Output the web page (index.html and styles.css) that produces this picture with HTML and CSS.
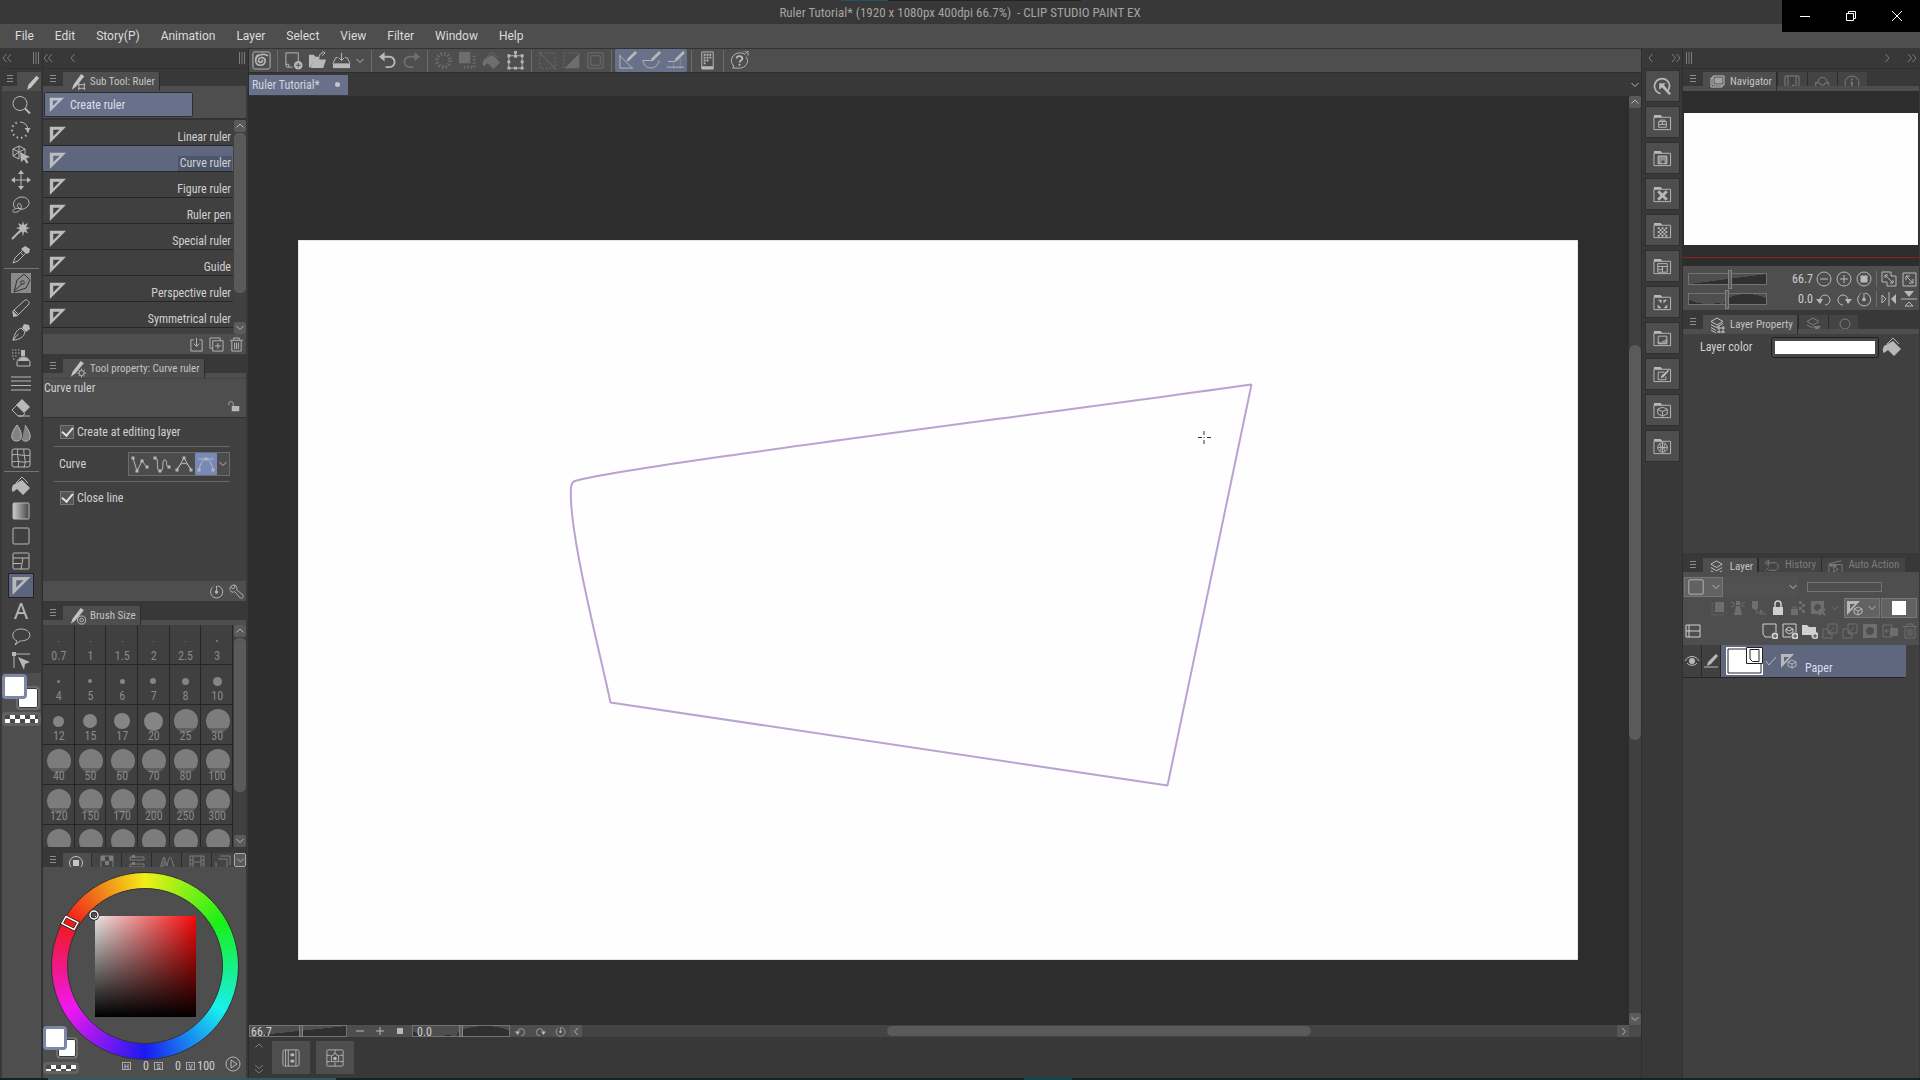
FILE: index.html
```
<!DOCTYPE html>
<html lang="en">
<head>
<meta charset="utf-8">
<title>Ruler Tutorial* - CLIP STUDIO PAINT EX</title>
<link rel="stylesheet" href="styles.css">
</head>
<body>
<svg class="defs" aria-hidden="true">
  <symbol id="menu" viewBox="0 0 8 10"><path d="M1 1.500h6M1 4.500h6M1 7.500h6"/></symbol>
  <symbol id="down" viewBox="0 0 10 10"><path d="M1.500 3L5 6.500 8.500 3"/></symbol>
  <symbol id="up" viewBox="0 0 10 10"><path d="M1.500 6.500L5 3l3.500 3.500"/></symbol>
  <symbol id="left" viewBox="0 0 10 10"><path d="M6.500 1L3 5l3.500 4"/></symbol>
  <symbol id="right" viewBox="0 0 10 10"><path d="M3.500 1L7 5 3.500 9"/></symbol>
  <symbol id="left2" viewBox="0 0 10 10"><path d="M4.500 1L1 5l3.500 4M9 1L5.500 5 9 9"/></symbol>
  <symbol id="right2" viewBox="0 0 10 10"><path d="M1 1l3.500 4L1 9M5.500 1L9 5 5.500 9"/></symbol>
  <symbol id="down2" viewBox="0 0 10 10"><path d="M1 1l4 3.500L9 1M1 5.500L5 9l4-3.500"/></symbol>
  <symbol id="grip" viewBox="0 0 6 12"><path d="M.5 0v12M3 0v12M5.500 0v12"/></symbol>
  <symbol id="pencil" viewBox="0 0 20 20"><path class="f" d="M15 3l3 2.500L9 16l-4.500 2.500L6 13z"/></symbol>
  <symbol id="pencil-list" viewBox="0 0 20 20"><path class="f" d="M13.500 1l3.500 2.500L8 15l-5 3.500L5 13z"/><path d="M10 13h8M10 17h8M11 11v8M17 11v8"/></symbol>
  <symbol id="pencil-gear" viewBox="0 0 20 20"><path class="f" d="M13 1l3.500 2.500L7 15l-5 3.500L4 13z"/><circle cx="14" cy="14.500" r="2.800"/><path d="M14 9.500v2M14 17.500v2M9 14.500h2M17 14.500h2M10.500 11l1.200 1.200M17.500 11l-1.200 1.200M10.500 18l1.200-1.200M17.500 18l-1.200-1.200"/></symbol>
  <symbol id="pencil-ring" viewBox="0 0 20 20"><path class="f" d="M13 1l3.500 2.500L7 15l-5 3.500L4 13z"/><circle cx="14" cy="14.500" r="4.500"/><circle cx="14" cy="14.500" r="2"/></symbol>
  <symbol id="zoomer" viewBox="0 0 20 20"><circle cx="9" cy="8.500" r="7"/><path d="M14 13.500l5 5" stroke-width="2"/></symbol>
  <symbol id="rotate-view" viewBox="0 0 20 20"><path d="M9 2a8 8 0 0 1 8 8" /><path d="M17 11a8 8 0 1 1-9-9" stroke-dasharray="1.500 3" stroke-width="2"/><path class="f" d="M13.500 8h6L17 12z"/></symbol>
  <symbol id="object" viewBox="0 0 20 20"><path d="M8 1l6 3v5M8 1L2 4v7l6 3M2 4l6 3 6-3M8 7v7M2 11l6-4M8 1v6"/><path class="f" d="M9 7l10 5-4 1.500 2.500 4-2 1-2.500-4-3 2.500z"/></symbol>
  <symbol id="move" viewBox="0 0 20 20"><path d="M10 3v14M3 10h14"/><path class="f" d="M10 0l3 4H7zM10 20l3-4H7zM0 10l4-3v6zM20 10l-4-3v6z"/></symbol>
  <symbol id="lasso" viewBox="0 0 20 20"><path d="M4 13C0 9 4 2 11 2s9 7 5 10-7 3-9 0 2-5 3-2-1 6-4 7-5-.5-4-2 5-2 9-1"/></symbol>
  <symbol id="wand" viewBox="0 0 20 20"><path d="M1 19l8-8" stroke-width="2"/><path class="f" d="M12 1l1 4 4-2-2 4 4 1-4 1.500 2 4-4-2-1 5-1-5-4 2 2-4-4-1.500 4-1-2-4 4 2z"/></symbol>
  <symbol id="dropper" viewBox="0 0 20 20"><path class="f" d="M14 1l5 3-1 4-3 1-5-5z"/><path d="M11 6L4 13l-2 5 5-2 7-7M10 8l3 3"/></symbol>
  <symbol id="pen" viewBox="0 0 20 20"><path class="chip" d="M0 0h20v20H0z"/><path d="M13 1l6 6-4 8-12 4L6 7zM3 18l8-7" stroke="#333"/><circle cx="11.500" cy="9.500" r="1.800" stroke="#333"/></symbol>
  <symbol id="pencil-tool" viewBox="0 0 20 20"><path d="M14 2c2-1 5 2 4 4L7 17c-3 2-6-1-5-4zM3 12l5 5"/><path class="f" d="M2 13l5 5-5 1z"/></symbol>
  <symbol id="brush" viewBox="0 0 20 20"><path class="f" d="M13 1l5 1 1 4-4 3-4-4z"/><path d="M10 5C5 7 4 11 2 17c6 0 11-3 12-8zM2 18c2-4 5-7 6-7"/></symbol>
  <symbol id="airbrush" viewBox="0 0 20 20"><path d="M1 2h9M1 5h9M1 8h6M2 11h3" stroke-dasharray="1.500 1.500"/><path class="f" d="M10 2h4v6h-4z"/><path d="M6 18v-4c1-4 4-5 6-5s6 1 7 5v4z"/><path class="f" d="M7 13c2-5 9-5 11 0z"/></symbol>
  <symbol id="lines" viewBox="0 0 20 20"><path d="M0 4h20M0 8h20M0 12.500h20M0 17h20"/></symbol>
  <symbol id="eraser" viewBox="0 0 20 20"><path class="f" d="M11 1l8 8-6 6-8-8z"/><path d="M6 7l-5 5 6 6h5l2-3M7 18h12"/></symbol>
  <symbol id="blend" viewBox="0 0 20 20"><path d="M6 2c3 4 5 8 4 13-1 4-8 4-9 0S3 6 6 2zM14 2c3 4 6 9 5 13s-7 4-8 1" fill="currentColor" fill-opacity=".55"/></symbol>
  <symbol id="mesh" viewBox="0 0 20 20"><rect x="1" y="1" width="18" height="18" rx="2"/><path d="M7 1c-2 6 2 12 0 18M13 1c-1 6 3 12 0 18M1 7c6-2 12 2 18 0M1 14c6-2 12 2 18-1"/></symbol>
  <symbol id="fill" viewBox="0 0 20 20"><path class="f" d="M2 9l9-5 8 8-7 7-6-6-4 3c-2-2-1-5 0-7z"/><path d="M5 7l6-6 6 6"/></symbol>
  <symbol id="gradient" viewBox="0 0 20 20"><rect x="2" y="2" width="16" height="16" rx="1" fill="url(#fade)"/></symbol>
  <symbol id="square" viewBox="0 0 20 20"><rect x="2" y="2" width="16" height="16" rx="1"/></symbol>
  <symbol id="frame" viewBox="0 0 20 20"><rect x="2" y="2" width="16" height="16" rx="1"/><path d="M2 7h16M2 12.500h8M12 7l-2 11"/></symbol>
  <symbol id="ruler" viewBox="0 0 20 20"><path class="f" fill-rule="evenodd" d="M1 1h19L1 20zM5 4.500v7.500L12.500 4.500z"/></symbol>
  <symbol id="balloon" viewBox="0 0 20 20"><path d="M6 15C-1 12 1 3 10 3s12 8 5 11c-3 1-6 1-6 1l-5 4z"/></symbol>
  <symbol id="correct" viewBox="0 0 20 20"><path d="M3 3h16M3 3v14"/><path class="f" d="M1 1h4v4H1zM7 6l12 5-5 2-1 6z"/></symbol>
  <symbol id="import" viewBox="0 0 16 16"><path d="M5 3H2v12h12V3h-3M8 1v9M5 7l3 3 3-3"/></symbol>
  <symbol id="duplicate" viewBox="0 0 16 16"><path d="M4 12H1V1h11v3M4 4h11v11H4zM9.500 6.500v6M6.500 9.500h6"/></symbol>
  <symbol id="trash" viewBox="0 0 16 16"><path d="M1 3.500h14M5 3V1h6v2M3 4v11h10V4M6 6v7M8 6v7M10 6v7"/></symbol>
  <symbol id="unlock" viewBox="0 0 16 16"><path class="f" d="M5 8h10v7H5z"/><path d="M7 8V5a3 3 0 0 0-6 0v2"/></symbol>
  <symbol id="curve1" viewBox="0 0 20 20"><path d="M3 4l4 13 5-10 5 6"/><path class="f" d="M1.500 2.500h3v3h-3zM5.500 15.500h3v3h-3zM10.500 5.500h3v3h-3zM15.500 11.500h3v3h-3z"/></symbol>
  <symbol id="curve2" viewBox="0 0 20 20"><path d="M3 4c5 0 0 13 5 13s1-12 5-11c3 0 0 7 4 7"/><path class="f" d="M1.500 2.500h3v3h-3zM6.500 15.500h3v3h-3zM15.500 11.500h3v3h-3z"/></symbol>
  <symbol id="curve3" viewBox="0 0 20 20"><path d="M3 16c3-9 11-9 14 0M3 16l7-12 7 12" stroke-width="1"/><path class="f" d="M1.500 14.500h3v3h-3zM8.500 2.500h3v3h-3zM15.500 14.500h3v3h-3z"/></symbol>
  <symbol id="curve4" viewBox="0 0 20 20"><path d="M3 17C5 1 15 1 17 17M2 5h16"/><path class="f" d="M1.500 14.500h3v3h-3zM8.500 3.500h3v3h-3zM15.500 14.500h3v3h-3z"/></symbol>
  <symbol id="reset" viewBox="0 0 16 16"><path d="M9 2a6.500 6.500 0 1 1-6 2.500"/><path d="M8 2v5" stroke-width="1"/><path d="M3 4l3-3" stroke-dasharray="1 1"/><circle class="f" cx="8" cy="8.500" r="1.800"/></symbol>
  <symbol id="wrench" viewBox="0 0 16 16"><path d="M6 1c-5 0-6 5-4 7 2 1 3 1 4 0l6 7c2 1 4-1 3-3L8 6c1-2 0-4-2-5v3L4 5 2 3"/></symbol>
  <symbol id="wheel" viewBox="0 0 16 16"><circle cx="8" cy="8" r="6.500"/><path class="f" d="M5 5h6v6H5z"/></symbol>
  <symbol id="swatchgrid" viewBox="0 0 16 16"><path d="M2 3h12v12H2z"/><path class="f" d="M2 3h4v5H2zM10 3h4v5h-4zM6 8h4v4H6z"/></symbol>
  <symbol id="sliders" viewBox="0 0 16 16"><path d="M1 4h14v3H1zM1 11h14v3H1z"/><path class="f" d="M3 2h3v3H3zM3 9h3v3H3z"/></symbol>
  <symbol id="mixing" viewBox="0 0 16 16"><path class="f" fill-opacity=".5" d="M1 16l4-12 3 8z"/><path d="M1 16C3 9 4 4 5 4s2 7 3 9c1-4 2-9 3-9s3 5 4 12"/></symbol>
  <symbol id="film" viewBox="0 0 16 16"><path d="M1 3h14v12H1zM4 3v12M12 3v12M1 7h3M1 11h3M12 7h3M12 11h3M4 9h8"/></symbol>
  <symbol id="cards" viewBox="0 0 16 16"><path d="M5 3h10v9M3 6h9v9M1 9v6"/></symbol>
  <symbol id="play" viewBox="0 0 16 16"><circle cx="8" cy="8" r="7"/><path d="M6 4l6 4-6 4z"/></symbol>
  <symbol id="logo" viewBox="0 0 20 20"><rect x="1" y="1" width="18" height="18" rx="2"/><path d="M10 10c2-1 1 2-1 2-4 0-2-6 2-5 5 1 3 8-2 8-7 0-6-9-2-11M17 5C12 2 5 4 4 9" stroke-width="1.700"/></symbol>
  <symbol id="new" viewBox="0 0 20 20"><path d="M9 17H3l-1-2V2h13v9M5 17v-3H2"/><circle class="f" cx="15" cy="15" r="4.500"/><path d="M15 12.500v5M12.500 15h5" stroke="#4e4e4e"/></symbol>
  <symbol id="open" viewBox="0 0 20 20"><path class="f" d="M1 17V4h5l2 2h4v3H6L3 17zM6 9h13l-3 9H3z"/><path d="M12 6c0-3 2-4 4-4M15 0l3 2-3 3"/></symbol>
  <symbol id="save" viewBox="0 0 20 20"><path class="f" d="M1 13h18v5H1z"/><path d="M6 7H4l-3 6M14 7h2l3 6M10 2v8M7 7l3 3 3-3"/></symbol>
  <symbol id="undo" viewBox="0 0 20 20"><path d="M4 6h8a5 5 0 0 1 0 11H8" stroke-width="2"/><path class="f" d="M7 1v10L1 6z"/></symbol>
  <symbol id="redo" viewBox="0 0 20 20"><path d="M16 6H8a5 5 0 0 0 0 11h4" stroke-width="2"/><path class="f" d="M13 1v10l6-5z"/></symbol>
  <symbol id="burst" viewBox="0 0 20 20"><circle cx="10" cy="10" r="7" stroke-width="4" stroke-dasharray="1.500 2.200"/></symbol>
  <symbol id="clear-out" viewBox="0 0 20 20"><path class="f" d="M1 1h12v12H1z"/><path d="M17 5v12H5" stroke-width="3" stroke-dasharray="1.500 2"/></symbol>
  <symbol id="transform" viewBox="0 0 20 20"><path d="M3 5h14v13H3zM10 1v4"/><path class="f" d="M1.500 3.500h3v3h-3zM15.500 3.500h3v3h-3zM1.500 16.500h3v3h-3zM15.500 16.500h3v3h-3zM8.500 0h3v3h-3zM8.500 4h3v3h-3zM1.500 10h3v3h-3zM15.500 10h3v3h-3zM8.500 16.500h3v3h-3z"/></symbol>
  <symbol id="deselect" viewBox="0 0 20 20"><path d="M2 2h16v16H2z" stroke-dasharray="2 2"/><path d="M1 1l18 18"/></symbol>
  <symbol id="invert" viewBox="0 0 20 20"><path d="M2 2h16v16H2z" stroke-dasharray="2 2"/><path class="f" d="M18 3v15H3z"/></symbol>
  <symbol id="border" viewBox="0 0 20 20"><path d="M2 2h16v16H2zM5 5h10v10H5z"/></symbol>
  <symbol id="snap1" viewBox="0 0 20 20"><path d="M2 4v14h14M2 5l13 13"/><path class="f" d="M18 0l2 2-8 8-3 1 1-3z"/></symbol>
  <symbol id="snap2" viewBox="0 0 20 20"><path d="M1 10h8M1 10c1 10 15 11 17 0"/><path class="f" d="M18 0l2 2-8 8-3 1 1-3z"/></symbol>
  <symbol id="snap3" viewBox="0 0 20 20"><path d="M1 17h18M2 11h8"/><path d="M8 12v7M15 8v11" stroke-opacity=".4"/><path class="f" d="M18 0l2 2-8 8-3 1 1-3z"/></symbol>
  <symbol id="phone" viewBox="0 0 20 20"><path d="M4 1h12v18H4z"/><path class="f" d="M4 16h12v3H4zM6 3h2v2H6zM9 3h2v2H9zM12 3h2v2h-2zM6 6h2v2H6zM9 6h2v2H9zM12 6h2v2h-2zM6 9h2v2H6zM9 9h2v2H9zM6 12h2v2H6z"/></symbol>
  <symbol id="help" viewBox="0 0 20 20"><path d="M4 16C-2 9 4 2 10 2c2 0 3 0 5 1M17 6c4 6-1 12-7 12H3l1-3M14 0h5v5M18 1l-3 3"/><path d="M7 8c0-4 6-3 6 0 0 2-3 2-3 4" stroke-width="2"/><path class="f" d="M9 13.500h2v2H9z"/></symbol>
  <symbol id="quick" viewBox="0 0 20 20"><path d="M8 17.500A8 8 0 1 1 17.500 9c0 3-1 5-3 7" stroke-width="1.800"/><path class="f" d="M6.500 6.500h7l-2 2 7.500 9-2 1.500-7.500-8-3 2.500z"/></symbol>
  <symbol id="folder" viewBox="0 0 20 20"><path d="M1 4.500h17.500v13H1z"/><path class="f" d="M1 2h7l2 2.500H1z"/></symbol>
  <symbol id="docs" viewBox="0 0 16 16"><path d="M4 2h11v9H4zM4 4H2v9h11v-2"/><path class="f" fill-opacity=".7" d="M5.500 3.500h8v6h-8z"/></symbol>
  <symbol id="bars" viewBox="0 0 16 16"><path d="M1 2h14v14H1zM4 2v14M12 2v14M6 14l3-3 3 2"/></symbol>
  <symbol id="cloud" viewBox="0 0 16 16"><path d="M4 8c0-6 9-6 9 0M1 9h5l1 2h3l1-2h4M3 8c-2 0-2 4 0 5M13 8c3 1 2 4 0 5M2 14h12"/></symbol>
  <symbol id="info" viewBox="0 0 16 16"><circle cx="8" cy="9" r="7"/><path d="M8 8v6M6.500 8.500H8M8 4.500v2" stroke-width="1.500"/></symbol>
  <symbol id="layers" viewBox="0 0 16 16"><path d="M8 1l6 3.500L8 8 2 4.500zM2 8l6 3.500L14 8M2 11.500L8 15l6-3.500"/></symbol>
  <symbol id="layersgrid" viewBox="0 0 16 16"><path d="M8 1l6 3.500L8 8 2 4.500zM2 7.500l5 3 7-4M2 10.500l5 3M2 13l5 3"/><path d="M9 10h2v2H9zM13 10h2v2h-2zM9 14h2v2H9zM13 14h2v2h-2z"/></symbol>
  <symbol id="layersearch" viewBox="0 0 16 16"><path d="M8 1l6 3.500L8 8 2 4.500zM2 8l6 3"/><path class="f" d="M8 9h8l-4 5z"/></symbol>
  <symbol id="circles" viewBox="0 0 16 16"><circle cx="10" cy="7" r="5"/><path class="f" d="M4 8a6 6 0 0 0 7 7l-7 1z"/></symbol>
  <symbol id="history" viewBox="0 0 16 16"><path d="M3 4h10l2 2v4l-2 2H5M5 1v6L1 4zM5 9l-3 3"/></symbol>
  <symbol id="clap" viewBox="0 0 16 16"><path d="M1 6h14v9H1zM1 5l13-3M6 8l5 3-5 3z"/><path d="M2 6l3 2M6 6l3 2" stroke-width="2"/></symbol>
  <symbol id="minus-c" viewBox="0 0 16 16"><circle cx="8" cy="8" r="7"/><path d="M4 8h8"/></symbol>
  <symbol id="plus-c" viewBox="0 0 16 16"><circle cx="8" cy="8" r="7"/><path d="M4 8h8M8 4v8"/></symbol>
  <symbol id="stop-c" viewBox="0 0 16 16"><circle cx="8" cy="8" r="7"/><path class="f" d="M4.500 4.500h7v7h-7z"/></symbol>
  <symbol id="fit2" viewBox="0 0 16 16"><path d="M1 1h9v4h5v10H6v-4H1zM4 4l8 8M4 7V4h3M9 12h3V9"/></symbol>
  <symbol id="fit" viewBox="0 0 16 16"><path d="M2 2h13v13H2zM5 5l7 7M5 9V5h4M8 12h4V8"/></symbol>
  <symbol id="ccw" viewBox="0 0 16 16"><path d="M4 9a5 5 0 1 1 5 5"/><path class="f" d="M0 8h7l-3 5z"/></symbol>
  <symbol id="cw" viewBox="0 0 16 16"><path d="M12 9a5 5 0 1 0-5 5"/><path class="f" d="M16 8H9l3 5z"/></symbol>
  <symbol id="fliph" viewBox="0 0 16 16"><path d="M8 1v14M1 4v8l4-4z"/><path class="f" d="M15 3v10L10 8z"/></symbol>
  <symbol id="flipv" viewBox="0 0 16 16"><path d="M0 8h16M4 15h8l-4-4z"/><path class="f" d="M3 0h10L8 6z"/></symbol>
  <symbol id="lock" viewBox="0 0 16 16"><path class="f" d="M3 7h10v8H3z"/><path d="M5 7V4a3 3 0 0 1 6 0v3" stroke-width="1.500"/></symbol>
  <symbol id="clip" viewBox="0 0 16 16"><path d="M2 4h11v11H2z" stroke-dasharray="1.500 1.500"/><path class="f" d="M5 2h9v10H5z"/></symbol>
  <symbol id="beacon" viewBox="0 0 16 16"><path class="f" d="M6 6h4l2 9H4zM6 1h4v4H6z"/><path d="M1 2l4 2M15 2l-4 2M1 7l4-2M15 7l-4-2"/></symbol>
  <symbol id="draft" viewBox="0 0 16 16"><path class="f" d="M2 1h6v7l-2 3-4-3z"/><path d="M6 14l2-3M9 14l2-4 2 4h3M11 10v5"/></symbol>
  <symbol id="lockpx" viewBox="0 0 16 16"><path class="f" d="M1 9h7v6H1zM9 1h3v3H9zM12 4h3v3h-3zM9 7h3v3H9zM12 10h3v3h-3z"/><path d="M3 9V7h3v2"/></symbol>
  <symbol id="maskoff" viewBox="0 0 16 16"><path class="f" fill-rule="evenodd" d="M1 1h13v8l-4 5H1zM7.500 4a3.500 3.500 0 1 0 .1 0z"/><path d="M9 9l6 6M15 9l-6 6" stroke-width="2"/></symbol>
  <symbol id="rulercube" viewBox="0 0 16 16"><path class="f" fill-rule="evenodd" d="M0 1h13L0 15zM3 4v5l5-5z"/><path d="M11 7l4 2v4l-4 2-4-2V9zM7 9l4 2 4-2M11 11v4"/></symbol>
  <symbol id="panes" viewBox="0 0 16 16"><path d="M1 2h14v12H1zM1 8h14M4 2v12"/></symbol>
  <symbol id="newlayer" viewBox="0 0 16 16"><path d="M9 14H3l-2-3V1h13v8"/><circle class="f" cx="13" cy="13" r="3.500"/><path d="M13 11v4M11 13h4" stroke="#4e4e4e"/></symbol>
  <symbol id="newvector" viewBox="0 0 16 16"><path d="M9 14H1V1h13v8M7 4l4 2v3l-4 2-3-2V6zM4 6l3 2 4-2"/><circle class="f" cx="13" cy="13" r="3.500"/><path d="M13 11v4M11 13h4" stroke="#4e4e4e"/></symbol>
  <symbol id="newfolder" viewBox="0 0 16 16"><path class="f" d="M0 12V2h5l2 2h7v8z"/><circle class="f" cx="13" cy="12.500" r="3.500" stroke="#4e4e4e"/><path d="M13 11v4M11 13h4" stroke="#4e4e4e"/></symbol>
  <symbol id="transfer" viewBox="0 0 16 16"><path d="M6 1h9v9H6zM6 6H1v9h9v-5M12 4l-5 6M7 7v4h4"/></symbol>
  <symbol id="mask" viewBox="0 0 16 16"><path class="f" fill-rule="evenodd" d="M1 1h14v14H1zM8 4a4 4 0 1 0 .1 0z"/></symbol>
  <symbol id="applymask" viewBox="0 0 16 16"><path d="M1 2h9v12H1zM3 8h4M5 6L3 8l2 2"/><path class="f" d="M8 5h8v8H8z"/></symbol>
  <symbol id="eye" viewBox="0 0 16 16"><path d="M1 8c3-6 11-6 14 0M3 10c2 3 8 3 10 0"/><circle class="f" cx="8" cy="8" r="3"/></symbol>
  <symbol id="edit" viewBox="0 0 16 16"><path class="f" d="M13 1l2 2-7 8-4 2 1-4z"/><path d="M1 14h14"/></symbol>
  <symbol id="timeline" viewBox="0 0 20 20"><rect x="1" y="1" width="18" height="18" rx="2"/><path d="M4 1v18M15.500 1v18M7 1v18"/><path class="f" d="M9.500 5h4v3h-4zM9.500 12h4v3h-4z"/></symbol>
  <symbol id="light" viewBox="0 0 20 20"><rect x="1" y="1" width="18" height="18" rx="1"/><path d="M1 7h4M15 7h4M1 14h4M15 14h4M10 1v4M10 15v4M6 7h2l1-2h2l1 2h2v7H6z"/><circle class="f" cx="10" cy="10.500" r="2"/></symbol>
  <linearGradient id="fade" x1="0" y1="0" x2="1" y2="0"><stop offset="0" stop-color="#ccc"/><stop offset="1" stop-color="#444"/></linearGradient>
</svg>

<div class="app">
  <header class="titlebar">
    <h1>Ruler Tutorial* (1920 x 1080px 400dpi 66.7%)&nbsp; - CLIP STUDIO PAINT EX</h1>
    <div class="wincontrols">
      <button aria-label="Minimize"><svg viewBox="0 0 12 12"><path d="M1 6.500h10"/></svg></button>
      <button aria-label="Restore"><svg viewBox="0 0 12 12"><path d="M1.500 3.500h7v7h-7zM3.500 3V1.500h7v7H9"/></svg></button>
      <button aria-label="Close"><svg viewBox="0 0 12 12"><path d="M1 1l10 10M11 1L1 11"/></svg></button>
    </div>
  </header>
  <nav class="menubar">
    <button>File</button><button>Edit</button><button>Story(P)</button><button>Animation</button><button>Layer</button><button>Select</button><button>View</button><button>Filter</button><button>Window</button><button>Help</button>
  </nav>

  <div class="work">
    <aside class="tools">
      <div class="dockhead"><svg class="s10"><use href="#left2"/></svg><svg class="grip"><use href="#grip"/></svg></div>
      <div class="tabs"><button class="burger" aria-label="Menu"><svg><use href="#menu"/></svg></button><button class="tab on tiny" aria-label="Tools"><svg><use href="#pencil"/></svg></button></div>
      <div class="toolset">
        <button aria-label="Zoom"><svg><use href="#zoomer"/></svg></button>
        <button aria-label="Rotate"><svg><use href="#rotate-view"/></svg></button>
        <button aria-label="Object"><svg><use href="#object"/></svg></button>
        <button aria-label="Move layer"><svg><use href="#move"/></svg></button>
        <button aria-label="Selection"><svg><use href="#lasso"/></svg></button>
        <button aria-label="Auto select"><svg><use href="#wand"/></svg></button>
        <button aria-label="Eyedropper"><svg><use href="#dropper"/></svg></button>
        <hr>
        <button aria-label="Pen"><svg><use href="#pen"/></svg></button>
        <button aria-label="Pencil"><svg><use href="#pencil-tool"/></svg></button>
        <button aria-label="Brush"><svg><use href="#brush"/></svg></button>
        <button aria-label="Airbrush"><svg><use href="#airbrush"/></svg></button>
        <button aria-label="Decoration"><svg><use href="#lines"/></svg></button>
        <button aria-label="Eraser"><svg><use href="#eraser"/></svg></button>
        <button aria-label="Blend"><svg><use href="#blend"/></svg></button>
        <button aria-label="Liquify"><svg><use href="#mesh"/></svg></button>
        <hr>
        <button aria-label="Fill"><svg><use href="#fill"/></svg></button>
        <button aria-label="Gradient"><svg><use href="#gradient"/></svg></button>
        <button aria-label="Figure"><svg><use href="#square"/></svg></button>
        <button aria-label="Frame border"><svg><use href="#frame"/></svg></button>
        <button class="on" aria-label="Ruler"><svg><use href="#ruler"/></svg></button>
        <button class="glyph" aria-label="Text">A</button>
        <button aria-label="Balloon"><svg><use href="#balloon"/></svg></button>
        <button aria-label="Correct line"><svg><use href="#correct"/></svg></button>
      </div>
      <div class="swatches">
        <button class="sub" aria-label="Sub color"></button>
        <button class="main" aria-label="Main color"></button>
        <button class="clear" aria-label="Transparent"></button>
      </div>
    </aside>

    <aside class="left">
      <div class="dockhead"><svg class="s10"><use href="#left2"/></svg><svg class="s10 second"><use href="#left"/></svg><svg class="grip"><use href="#grip"/></svg></div>

      <section class="subtool">
        <div class="tabs"><button class="burger" aria-label="Menu"><svg><use href="#menu"/></svg></button><button class="tab on"><svg><use href="#pencil-list"/></svg>Sub Tool: Ruler</button></div>
        <div class="group"><button><svg><use href="#ruler"/></svg>Create ruler</button></div>
        <div class="scroller">
          <ul class="rulers">
            <li><button><svg><use href="#ruler"/></svg><span>Linear ruler</span></button></li>
            <li class="on"><button><svg><use href="#ruler"/></svg><span>Curve ruler</span></button></li>
            <li><button><svg><use href="#ruler"/></svg><span>Figure ruler</span></button></li>
            <li><button><svg><use href="#ruler"/></svg><span>Ruler pen</span></button></li>
            <li><button><svg><use href="#ruler"/></svg><span>Special ruler</span></button></li>
            <li><button><svg><use href="#ruler"/></svg><span>Guide</span></button></li>
            <li><button><svg><use href="#ruler"/></svg><span>Perspective ruler</span></button></li>
            <li><button><svg><use href="#ruler"/></svg><span>Symmetrical ruler</span></button></li>
          </ul>
          <div class="vbar"><button aria-label="Up"><svg><use href="#up"/></svg></button><div class="track"><i class="t80"></i></div><button aria-label="Down"><svg><use href="#down"/></svg></button></div>
        </div>
        <div class="foot"><button aria-label="Import"><svg><use href="#import"/></svg></button><button aria-label="Duplicate"><svg><use href="#duplicate"/></svg></button><button aria-label="Delete"><svg><use href="#trash"/></svg></button></div>
      </section>

      <section class="property">
        <div class="tabs"><button class="burger" aria-label="Menu"><svg><use href="#menu"/></svg></button><button class="tab on"><svg><use href="#pencil-gear"/></svg>Tool property: Curve ruler</button></div>
        <div class="name"><span>Curve ruler</span><button aria-label="Lock"><svg><use href="#unlock"/></svg></button></div>
        <div class="props">
          <label class="prop"><input type="checkbox" checked>Create at editing layer</label>
          <div class="prop mid"><span>Curve</span>
            <div class="segment">
              <button aria-label="Straight line"><svg><use href="#curve1"/></svg></button><button aria-label="Spline"><svg><use href="#curve2"/></svg></button><button aria-label="Quadratic Bezier"><svg><use href="#curve3"/></svg></button><button class="on" aria-label="Cubic Bezier"><svg><use href="#curve4"/></svg></button><button class="more" aria-label="More"><svg><use href="#down"/></svg></button>
            </div>
          </div>
          <label class="prop"><input type="checkbox" checked>Close line</label>
        </div>
        <div class="foot"><button aria-label="Reset"><svg><use href="#reset"/></svg></button><button aria-label="Settings"><svg><use href="#wrench"/></svg></button></div>
      </section>

      <section class="brush">
        <div class="tabs"><button class="burger" aria-label="Menu"><svg><use href="#menu"/></svg></button><button class="tab on"><svg><use href="#pencil-ring"/></svg>Brush Size</button></div>
        <div class="scroller">
          <div class="sizes">
            <button><i class="d1"></i>0.7</button><button><i class="d1"></i>1</button><button><i class="d1"></i>1.5</button><button><i class="d1"></i>2</button><button><i class="d1"></i>2.5</button><button><i class="d2"></i>3</button>
            <button><i class="d3"></i>4</button><button><i class="d4"></i>5</button><button><i class="d5"></i>6</button><button><i class="d6"></i>7</button><button><i class="d7"></i>8</button><button><i class="d9"></i>10</button>
            <button><i class="d11"></i>12</button><button><i class="d14"></i>15</button><button><i class="d16"></i>17</button><button><i class="d19"></i>20</button><button><i></i>25</button><button><i></i>30</button>
            <button><i></i>40</button><button><i></i>50</button><button><i></i>60</button><button><i></i>70</button><button><i></i>80</button><button><i></i>100</button>
            <button><i></i>120</button><button><i></i>150</button><button><i></i>170</button><button><i></i>200</button><button><i></i>250</button><button><i></i>300</button>
            <button aria-label="400"><i></i></button><button aria-label="500"><i></i></button><button aria-label="600"><i></i></button><button aria-label="700"><i></i></button><button aria-label="800"><i></i></button><button aria-label="1000"><i></i></button>
          </div>
          <div class="vbar"><button aria-label="Up"><svg><use href="#up"/></svg></button><div class="track"><i class="t76"></i></div><button aria-label="Down"><svg><use href="#down"/></svg></button></div>
        </div>
      </section>

      <section class="color">
        <div class="tabs colortabs"><button class="burger" aria-label="Menu"><svg><use href="#menu"/></svg></button><button class="tab on" aria-label="Color wheel"><svg><use href="#wheel"/></svg></button><button class="tab" aria-label="Color set"><svg><use href="#swatchgrid"/></svg></button><button class="tab" aria-label="Color slider"><svg><use href="#sliders"/></svg></button><button class="tab" aria-label="Mixing"><svg><use href="#mixing"/></svg></button><button class="tab" aria-label="Intermediate"><svg><use href="#film"/></svg></button><button class="tab" aria-label="Approximate"><svg><use href="#cards"/></svg></button><button class="drop" aria-label="More"><svg><use href="#down"/></svg></button></div>
        <div class="wheelbox">
          <div class="hue"><div class="hole"><div class="sv"></div></div>
            <svg class="marks" viewBox="0 0 188 188"><g fill="none" stroke="#222" stroke-width="3"><path d="M15 44.500l12 6-4 7-12-6z"/><circle cx="43" cy="43" r="4"/></g><g fill="none" stroke="#fff" stroke-width="1.500"><path d="M15 44.500l12 6-4 7-12-6z"/><circle cx="43" cy="43" r="4"/></g></svg>
          </div>
          <div class="swatches small"><button class="sub" aria-label="Sub color"></button><button class="main" aria-label="Main color"></button><button class="clear" aria-label="Transparent"></button></div>
          <div class="hsv"><b>H</b><span>0</span><b>S</b><span>0</span><b>V</b><span class="wide">100</span><button aria-label="Switch"><svg><use href="#play"/></svg></button></div>
        </div>
      </section>
    </aside>

    <main class="center">
      <div class="commands">
        <button aria-label="Clip Studio"><svg><use href="#logo"/></svg></button><hr>
        <button aria-label="New"><svg><use href="#new"/></svg></button><button aria-label="Open"><svg><use href="#open"/></svg></button><button aria-label="Save"><svg><use href="#save"/></svg></button><button class="arrow" aria-label="Save options"><svg><use href="#down"/></svg></button><hr>
        <button aria-label="Undo"><svg><use href="#undo"/></svg></button><button class="dim" aria-label="Redo"><svg><use href="#redo"/></svg></button><hr>
        <button class="dim" aria-label="Delete"><svg><use href="#burst"/></svg></button><button class="dim" aria-label="Delete outside"><svg><use href="#clear-out"/></svg></button><button class="dim" aria-label="Fill"><svg><use href="#fill"/></svg></button><button aria-label="Transform"><svg><use href="#transform"/></svg></button><hr>
        <button class="dim" aria-label="Deselect"><svg><use href="#deselect"/></svg></button><button class="dim" aria-label="Invert selection"><svg><use href="#invert"/></svg></button><button class="dim" aria-label="Selection border"><svg><use href="#border"/></svg></button><hr>
        <span class="snaps"><button aria-label="Snap to ruler"><svg><use href="#snap1"/></svg></button><button aria-label="Snap to special ruler"><svg><use href="#snap2"/></svg></button><button aria-label="Snap to grid"><svg><use href="#snap3"/></svg></button></span><hr>
        <button aria-label="Companion"><svg><use href="#phone"/></svg></button><hr>
        <button aria-label="Support"><svg><use href="#help"/></svg></button>
      </div>
      <div class="doctabs"><button class="doc">Ruler Tutorial*<i></i></button><button class="list" aria-label="Documents"><svg class="s10"><use href="#down"/></svg></button></div>
      <div class="stage">
        <div class="view">
          <svg class="paper" viewBox="0 0 1280 720" role="img" aria-label="Canvas with curve ruler">
            <rect width="1280" height="720" fill="#fefefe"/>
            <path d="M312.500 462.500C300 404 270 290 273 247Q274 242 277 241C330 226 700 180 953.500 144.500L869.500 545.500z" fill="none" stroke="#b9a3d2" stroke-width="2" stroke-linejoin="bevel"/>
            <path d="M906 191v4m0 5v4M900 197.500h4m5 0h4M905.500 197.500h1" fill="none" stroke="#333"/>
          </svg>
        </div>
        <div class="vbar big"><button aria-label="Up"><svg><use href="#up"/></svg></button><div class="track"><i></i></div><button aria-label="Down"><svg><use href="#down"/></svg></button></div>
      </div>
      <div class="status">
        <label class="gauge ramp"><input type="range" aria-label="Zoom" value="53"><span>66.7</span></label>
        <button aria-label="Zoom out"><svg><path d="M1 5h8"/></svg></button><button aria-label="Zoom in"><svg><path d="M1 5h8M5 1v8"/></svg></button><button aria-label="Fit"><svg><path class="f" d="M2 2h6v6H2z"/></svg></button>
        <label class="gauge hump"><input type="range" aria-label="Rotation" value="50"><span>0.0</span></label>
        <button aria-label="Rotate left"><svg viewBox="0 0 16 16"><use href="#ccw"/></svg></button><button aria-label="Rotate right"><svg viewBox="0 0 16 16"><use href="#cw"/></svg></button><button aria-label="Reset rotation"><svg viewBox="0 0 16 16"><use href="#reset"/></svg></button>
        <div class="hbar"><button aria-label="Left"><svg><use href="#left"/></svg></button><div class="track"><i></i></div><button aria-label="Right"><svg><use href="#right"/></svg></button><b></b></div>
      </div>
      <div class="bottom">
        <div class="stack"><svg class="s10"><use href="#up"/></svg><svg class="s10"><use href="#down2"/></svg></div>
        <button aria-label="Timeline"><svg><use href="#timeline"/></svg></button>
        <button aria-label="Light table"><svg><use href="#light"/></svg></button>
      </div>
    </main>

    <aside class="materials">
      <div class="dockhead"><svg class="s10"><use href="#left"/></svg><svg class="s10 far"><use href="#right2"/></svg></div>
      <button aria-label="Quick access"><svg><use href="#quick"/></svg></button>
      <button aria-label="Materials: download"><svg viewBox="0 0 20 20"><use href="#folder"/><path d="M6 9h8v6H6zM7.500 9V7.500h5V9M10 9v3M6 12h8"/></svg></button>
      <button aria-label="Materials: all"><svg viewBox="0 0 20 20"><use href="#folder"/><path class="f" fill-opacity=".6" d="M5 7h10v9h-3v-4H9v4H5z"/><path d="M5.500 7.500h9v8h-9z"/></svg></button>
      <button aria-label="Materials: color pattern"><svg viewBox="0 0 20 20"><use href="#folder"/><path d="M5.500 6.500l9 9M14.500 6.500l-9 9" stroke-width="3"/></svg></button>
      <button aria-label="Materials: monochrome"><svg viewBox="0 0 20 20"><use href="#folder"/><path d="M5 7.500h10M5 11.500h10M5 15.500h10" stroke-width="2" stroke-dasharray="2 2"/><path d="M7 9.500h8M7 13.500h8" stroke-width="2" stroke-dasharray="2 2"/></svg></button>
      <button aria-label="Materials: manga"><svg viewBox="0 0 20 20"><use href="#folder"/><path d="M5 7h10v9H5zM5 10h10M5 13h5M10 10v6"/></svg></button>
      <button aria-label="Materials: effects"><svg viewBox="0 0 20 20"><use href="#folder"/><path class="f" d="M5 7h4v4zM15 7h-4v4zM5 16h4l-4-4zM15 16h-4l4-4z"/></svg></button>
      <button aria-label="Materials: image"><svg viewBox="0 0 20 20"><use href="#folder"/><path d="M5.500 7.500h9v8h-9z"/><path class="f" fill-opacity=".6" d="M5 16v-3l3 1 3-2 4-2v6z"/></svg></button>
      <button aria-label="Materials: brush"><svg viewBox="0 0 20 20"><use href="#folder"/><path d="M12 7.500H5.500v8h8V12"/><path class="f" d="M16 5l1 1-6 7-3 1 1-3z"/></svg></button>
      <button aria-label="Materials: 3D"><svg viewBox="0 0 20 20"><use href="#folder"/><path d="M10 6.500l5 2v5l-5 2.500-5-2.500v-5zM5 9l5 2 5-2M10 11v5"/></svg></button>
      <button aria-label="Materials: pose"><svg viewBox="0 0 20 20"><use href="#folder"/><circle cx="10" cy="11" r="5"/><path d="M10 6v10M5 11h10M7 7c2 3 2 6 0 8M13 7c-2 3-2 6 0 8"/></svg></button>
    </aside>

    <aside class="right">
      <div class="dockhead"><svg class="grip"><use href="#grip"/></svg><svg class="s10 far"><use href="#right"/></svg><svg class="s10"><use href="#right2"/></svg></div>
      <section class="navigator">
        <div class="tabs"><button class="burger" aria-label="Menu"><svg><use href="#menu"/></svg></button><button class="tab on nav"><svg><use href="#docs"/></svg>Navigator</button><button class="tab" aria-label="Sub view"><svg><use href="#bars"/></svg></button><button class="tab" aria-label="Item bank"><svg><use href="#cloud"/></svg></button><button class="tab" aria-label="Information"><svg><use href="#info"/></svg></button></div>
        <div class="preview"><div></div></div>
        <div class="navctl">
          <div><label class="gauge ramp"><input type="range" aria-label="Zoom" value="53"></label><output>66.7</output><button aria-label="Zoom out"><svg><use href="#minus-c"/></svg></button><button aria-label="Zoom in"><svg><use href="#plus-c"/></svg></button><button aria-label="100%"><svg><use href="#stop-c"/></svg></button><hr><button aria-label="Fit to navigator"><svg><use href="#fit2"/></svg></button><button aria-label="Fit to screen"><svg><use href="#fit"/></svg></button></div>
          <div><label class="gauge hump"><input type="range" aria-label="Rotation" value="50"></label><output>0.0</output><button aria-label="Rotate left"><svg><use href="#ccw"/></svg></button><button aria-label="Rotate right"><svg><use href="#cw"/></svg></button><button aria-label="Reset"><svg><use href="#reset"/></svg></button><hr><button aria-label="Flip horizontal"><svg><use href="#fliph"/></svg></button><button aria-label="Flip vertical"><svg><use href="#flipv"/></svg></button></div>
        </div>
      </section>
      <section class="layerprop">
        <div class="tabs"><button class="burger" aria-label="Menu"><svg><use href="#menu"/></svg></button><button class="tab on nav"><svg><use href="#layersgrid"/></svg>Layer Property</button><button class="tab" aria-label="Search layer"><svg><use href="#layersearch"/></svg></button><button class="tab" aria-label="Comps"><svg><use href="#circles"/></svg></button></div>
        <div class="lcolor"><span>Layer color</span><button class="well" aria-label="Layer color"></button><button aria-label="Apply"><svg><use href="#fill"/></svg></button></div>
      </section>
      <section class="layerpanel">
        <div class="tabs flat"><button class="burger" aria-label="Menu"><svg><use href="#menu"/></svg></button><button class="tab on lay"><svg><use href="#layers"/></svg>Layer</button><button class="tab txt"><svg><use href="#history"/></svg>History</button><button class="tab txt"><svg><use href="#clap"/></svg>Auto Action</button></div>
        <div class="lctl">
          <div class="r1"><button class="box" aria-label="Palette color"><svg><use href="#square"/></svg><svg class="s10"><use href="#down"/></svg></button><button class="blend" aria-label="Blending mode"><svg class="s10"><use href="#down"/></svg></button><meter aria-label="Opacity" value="0"></meter></div>
          <div class="r2"><svg class="dim"><use href="#clip"/></svg><svg class="dim"><use href="#beacon"/></svg><svg class="dim"><use href="#draft"/></svg><svg><use href="#lock"/></svg><svg class="dim"><use href="#lockpx"/></svg><svg class="dim"><use href="#maskoff"/></svg><svg class="s10 dim"><use href="#down"/></svg><button class="box" aria-label="Ruler range"><svg><use href="#rulercube"/></svg><svg class="s10"><use href="#down"/></svg></button><button class="box" aria-label="Layer color"><i></i></button></div>
          <div class="r3"><svg class="first"><use href="#panes"/></svg><svg><use href="#newlayer"/></svg><svg><use href="#newvector"/></svg><svg><use href="#newfolder"/></svg><svg class="dim"><use href="#transfer"/></svg><svg class="dim"><use href="#transfer"/></svg><svg class="dim"><use href="#mask"/></svg><svg class="dim"><use href="#applymask"/></svg><svg class="dim"><use href="#trash"/></svg></div>
        </div>
        <div class="layer">
          <button aria-label="Visibility"><svg><use href="#eye"/></svg></button><button aria-label="Edit"><svg><use href="#edit"/></svg></button>
          <div class="entry"><svg class="thumb" viewBox="0 0 40 32"><path d="M1.500 2.500h36v27h-36z" fill="#fff" stroke="#fff"/><path d="M3 4h33v24H3z" fill="#fff" stroke="#222"/><path d="M21.500 2.500h16v16h-16z" fill="#fff" stroke="#222"/><path d="M25 4.500h9v12h-6.500l-2.500-2.500z" fill="none" stroke="#222"/></svg><svg class="s12" viewBox="0 0 12 10"><path d="M1 5l3 4 7-8"/></svg><svg class="rc"><use href="#rulercube"/></svg><span>Paper</span></div>
        </div>
      </section>
    </aside>
  </div>
  <div class="edge"></div>
</div>
</body>
</html>
```
FILE: styles.css
```
:root {
  --bg: #383838;
  --panel: #4e4e4e;
  --list: #404040;
  --dark: #2d2d2d;
  --sel: #69718a;
  --ink: #b8b8b8;
  --text: #d0d0d0;
  --body: "Roboto Condensed", "Liberation Sans", sans-serif;
}
* { box-sizing: border-box; }
body { margin: 0; background: var(--bg); color: var(--text); font: 12px/16px var(--body); }
.defs { position: absolute; width: 0; height: 0; }
svg { display: block; width: 20px; height: 20px; flex: none; fill: none; stroke: currentColor; }
.f { fill: currentColor; stroke: none; }
.chip { fill: #8a8a8a; stroke: none; }
.s10 { width: 10px; height: 10px; }
button { margin: 0; padding: 0; border: 0; background: none; color: var(--ink); font: inherit; display: flex; align-items: center; flex: none; }
.dim { color: #6e6e6e; }
hr { margin: 0; border: 0; background: #6c6c6c; flex: none; }

.app { display: flex; flex-direction: column; min-height: 100vh; }
.titlebar { position: relative; height: 24px; flex: none; background: linear-gradient(to right, transparent 840px, #1c5560 840px, #1c5560 888px, #222 888px, #222 1081px, transparent 1081px) top / 100% 1px no-repeat; }
.titlebar h1 { margin: 0; text-align: center; font: 13px/25px var(--body); color: #a4a4a4; }
.wincontrols { position: absolute; z-index: 2; top: 0; right: 0; display: flex; background: #000; }
.wincontrols button { width: 46px; height: 32px; color: #fff; justify-content: center; }
.wincontrols svg { width: 12px; height: 12px; }
.menubar { display: flex; gap: 21px; height: 24px; flex: none; padding-left: 15px; background: var(--panel); }
.menubar button { color: #dcdcdc; font: 12px/24px Roboto, sans-serif; }
.edge { height: 2px; flex: none; background: linear-gradient(to right, #12242a 48px, #34565c 48px, #34565c 336px, #12242a 336px, #12242a 1024px, #0d4a50 1024px, #0d4a50 1072px, #12242a 1072px); }

.work { flex: 1; display: grid; grid-template-columns: 43px 205px minmax(0, 1fr) 42px 237px; }
aside, main { display: flex; flex-direction: column; min-width: 0; }
.dockhead { display: flex; align-items: center; gap: 10px; height: 21px; margin-bottom: 3px; flex: none; color: #7c7c7c; border-bottom: 1px solid #303030; }
.grip { width: 6px; height: 12px; }
.far { margin-left: auto; }

/* Palette tabs: the active tab runs into the strip below */
.tabs { display: flex; height: 19px; flex: none; background: linear-gradient(#383838 14px, var(--panel) 14px); }
.tab { height: 14px; overflow: hidden; background: #444; border-left: 1px solid #2c2c2c; color: #7c7c7c; align-items: flex-start; width: 30px; justify-content: center; }
.tab svg { width: 16px; height: 16px; }
.tab.on { height: 19px; width: auto; background: var(--panel); color: #c4c4c4; font: 11px/20px var(--body); align-items: center; padding: 0 4px 0 6px; gap: 3px; border-right: 1px solid #2c2c2c; border-left: 0; }
.tab.on svg { width: 18px; height: 18px; }
.burger { width: 20px; height: 14px; justify-content: center; color: #8c8c8c; }
.burger svg { width: 8px; height: 10px; }
.foot { display: flex; align-items: center; justify-content: flex-end; gap: 5px; height: 20px; padding-right: 2px; background: var(--panel); }
.foot svg { width: 15px; height: 15px; }

.tools { padding: 0 1px 0 2px; background: var(--bg); border-right: 1px solid #2f2f2f; }
.tools .dockhead { justify-content: space-between; padding-right: 2px; }
.tools .burger { width: 15px; }
.tab.on.tiny { width: 24px; padding: 0 0 0 6px; border: 0; }
.toolset { background: var(--list); padding-top: 1px; }
.toolset button { width: 38px; height: 25px; justify-content: center; }
.toolset hr { height: 1px; margin: 1px 2px; background: #757575; }
.toolset .on svg { width: 24px; height: 23px; padding: 2px; background: #5d6480; outline: 1px solid #222; }
.toolset .glyph { font: 22px/25px "Noto Sans", sans-serif; }
.swatches { position: relative; flex: 1; background: var(--panel); }
.swatches button { position: absolute; background: #fff; border-radius: 4px; }
.swatches .main { left: 0; top: 1px; width: 25px; height: 25px; border: 3px solid #7b86a8; }
.swatches .sub { left: 14px; top: 13px; width: 24px; height: 24px; border: 2px solid #6a6a6a; outline: 1px solid #3a3a3a; outline-offset: -3px; }
.swatches .clear { left: 0; top: 39px; width: 39px; height: 14px; border: 3px solid #626262; background: repeating-conic-gradient(#fff 0 25%, #4a4a4a 0 50%) 0 0 / 10px 8px; }

.left { background: var(--bg); padding-right: 2px; }
.left .dockhead .second { margin-left: 5px; }
.left .dockhead .grip { margin-left: auto; margin-right: 1px; }
.left section { display: flex; flex-direction: column; flex: none; }
.subtool { height: 287px; }
.group { height: 29px; padding: 1px; background: var(--panel); border-bottom: 2px solid #333; }
.group button { width: 149px; height: 25px; gap: 6px; padding-left: 4px; background: var(--sel); border: 1px solid #2a2e3a; border-radius: 2px; color: #dcdfe8; }
.group svg { width: 15px; height: 15px; color: #c0c4cf; }
.scroller { display: flex; flex: 1; min-height: 0; overflow: hidden; background: var(--list); }
.rulers { flex: 1; margin: 0; padding: 0; list-style: none; }
.rulers li { height: 26px; border-bottom: 1px solid #262626; }
.rulers button { width: 100%; height: 25px; padding: 0 1px 0 6px; justify-content: space-between; align-items: flex-end; color: var(--text); }
.rulers svg { width: 17px; height: 17px; margin-bottom: 2px; color: #bcbcbc; }
.rulers span { padding: 0 1px 0 2px; line-height: 15px; }
.rulers .on { background: #5f677f; }
.rulers .on span { background: #4d556b; }
.vbar { width: 12px; margin-left: 1px; display: flex; flex-direction: column; background: var(--list); }
.vbar button { height: 12px; justify-content: center; background: #5a5a5a; border-radius: 2px; }
.vbar button svg { width: 10px; height: 10px; }
.track { flex: 1; min-height: 0; }
.track i { display: block; background: #5a5a5a; border-radius: 5px; }
.t80 { height: 84%; margin-top: 1px; }
.t76 { height: 78%; margin-top: 1px; }
.subtool .foot { margin-bottom: 5px; }

.property { height: 247px; }
.name { display: flex; justify-content: space-between; height: 40px; padding: 1px 6px 5px 1px; background: var(--panel); border-bottom: 1px solid #333; border-top: 1px solid #444; }
.name button { align-self: flex-end; }
.name svg { width: 12px; height: 12px; }
.props { flex: 1; padding: 0 16px 0 11px; background: var(--list); }
.prop { display: flex; align-items: center; gap: 3px; height: 27px; padding-left: 6px; }
.prop.mid { height: 36px; justify-content: space-between; border-top: 1px solid #666; border-bottom: 1px solid #666; padding-left: 5px; margin: 1px 0 2px; }
.prop input { appearance: none; margin: 0; width: 14px; height: 14px; border: 1px solid #777; background: #555; display: grid; place-items: center; }
.prop input:checked::before { content: ""; width: 5px; height: 9px; margin-top: -2px; border: solid #e0e0e0; border-width: 0 2px 2px 0; transform: rotate(40deg); }
.segment { display: flex; height: 24px; border: 1px solid #6c6c6c; background: #4c4c4c; }
.segment button { width: 22px; justify-content: center; }
.segment svg { width: 20px; height: 20px; }
.segment .on { background: #7889b8; }
.segment .more { width: 12px; }
.segment .more svg { width: 10px; height: 10px; }
.property .foot { margin-bottom: 5px; }

.brush { height: 247px; }
.brush .scroller { margin-bottom: 6px; }
.sizes { flex: 1; display: grid; grid-template-columns: repeat(6, 1fr); grid-auto-rows: 40px; }
.sizes button { position: relative; isolation: isolate; flex-direction: column; justify-content: flex-end; padding-left: 1px; border-right: 1px solid #262626; border-bottom: 1px solid #262626; color: #8a8a8a; line-height: 16px; }
.sizes i { position: absolute; z-index: -1; top: 16px; left: 50%; width: 24px; height: 24px; margin: -12px 0 0 -11px; border-radius: 50%; background: linear-gradient(#7c7c7c 19px, #606060 19px); }
.sizes i[class] { background: #858585; }
.sizes .d1 { width: 1px; height: 1px; margin: 0; }
.sizes .d2 { width: 2px; height: 2px; margin: -1px; }
.sizes .d3 { width: 3px; height: 3px; margin: -1px; }
.sizes .d4 { width: 4px; height: 4px; margin: -2px; }
.sizes .d5 { width: 5px; height: 5px; margin: -2px; }
.sizes .d6 { width: 6px; height: 6px; margin: -3px; }
.sizes .d7 { width: 7px; height: 7px; margin: -3px; }
.sizes .d9 { width: 9px; height: 9px; margin: -4px; }
.sizes .d11 { width: 11px; height: 11px; margin: -5px; }
.sizes .d14 { width: 14px; height: 14px; margin: -7px; }
.sizes .d16 { width: 16px; height: 16px; margin: -8px; }
.sizes .d19 { width: 19px; height: 19px; margin: -9px; }

.left .color { flex: 1; }
.colortabs { height: 14px; background: var(--bg); }
.colortabs .tab.on { height: 18px; width: 28px; padding: 2px 6px 0 4px; border: 0; }
.colortabs .tab.on svg { width: 16px; height: 16px; }
.colortabs .tab:nth-child(7) { flex: 1; width: auto; }
.drop { width: 12px; height: 14px; justify-content: center; border: 1px solid #aaa; border-radius: 2px; background: #5a5a5a; }
.drop svg { width: 9px; height: 9px; }
.wheelbox { position: relative; flex: 1; display: flex; flex-direction: column; justify-content: space-between; padding: 5px 0 0 8px; background: var(--panel); }
.hue { position: relative; width: 188px; height: 188px; border-radius: 50%; border: 1px solid #333; display: grid; place-items: center; background: conic-gradient(#f2ee18, #18f018 60deg, #18f0ee 120deg, #1a1af0 180deg, #f018f0 240deg, #f01a1a 300deg, #f2ee18); }
.hole { width: 156px; height: 156px; border-radius: 50%; border: 1px solid #333; background: var(--panel); display: grid; place-items: center; }
.sv { width: 101px; height: 101px; background: linear-gradient(transparent, #000), linear-gradient(to right, #e8e8e8, #f80808); }
.marks { position: absolute; inset: -1px; width: 188px; height: 188px; }
.swatches.small { position: absolute; left: 0; bottom: 0; width: 38px; height: 53px; background: none; }
.small .main { width: 24px; height: 24px; }
.small .sub { left: 13px; top: 12px; width: 22px; height: 22px; }
.small .clear { top: 37px; width: 36px; height: 12px; }
.hsv { display: flex; align-items: center; justify-content: flex-end; height: 18px; padding: 0 5px 6px 0; }
.hsv b { width: 9px; height: 8px; border: 1px solid #aaa; font: 8px/7px var(--body); text-align: center; color: #ccc; }
.hsv span { width: 23px; padding-right: 5px; text-align: right; }
.hsv .wide { width: 21px; padding-right: 1px; }
.hsv button { margin-left: 9px; margin-top: -4px; }
.hsv svg { width: 16px; height: 16px; }

.center { background: var(--bg); border-left: 1px solid #2c2c2c; }
.commands { display: flex; align-items: center; height: 25px; flex: none; background: var(--panel); border-bottom: 1px solid #2e2e2e; border-top: 1px solid #333; }
.commands button { width: 24px; height: 23px; justify-content: center; }
.commands button svg { width: 19px; height: 19px; }
.commands .arrow { width: 14px; }
.commands .arrow svg { width: 10px; height: 10px; }
.commands hr { width: 1px; height: 22px; margin: 0 3px 0 4px; }
.snaps { display: flex; background: var(--sel); border-radius: 2px; }
.doctabs { display: flex; justify-content: space-between; align-items: center; height: 23px; flex: none; padding-right: 1px; }
.doc { width: 99px; height: 20px; padding: 0 8px 0 3px; justify-content: space-between; background: var(--sel); color: #d0d4e0; }
.doc i { width: 5px; height: 5px; border-radius: 50%; background: #c0c4d0; }
.stage { flex: 1; display: flex; min-height: 0; background: var(--dark); }
.view { flex: 1; min-width: 0; padding: 144px 51px 64px 49px; }
.paper { width: 100%; height: auto; }
.big i { height: 395px; margin-top: 237px; border-radius: 6px; }
.big { margin: 0; }
.status { display: flex; height: 12px; flex: none; background: var(--panel); }
.status > button { width: 20px; justify-content: center; }
.status > button svg { width: 11px; height: 11px; }
.gauge { position: relative; display: block; width: 98px; height: 12px; border: 1px solid #727272; }
.ramp { background: linear-gradient(to bottom right, #4e4e4e 50%, #303030 51%); }
.hump { background: radial-gradient(30% 100% at 75% 100%, #303030 98%, transparent), radial-gradient(30% 100% at 25% 0, #4e4e4e 98%, transparent), linear-gradient(to right, #303030 40%, #4e4e4e 40%); }
.gauge input { appearance: none; display: block; width: 100%; height: 100%; margin: 0; background: none; }
.gauge input::-webkit-slider-thumb { appearance: none; width: 4px; height: 12px; background: #5c5c5c; border: 1px solid #828282; }
.gauge span { position: absolute; left: 1px; top: -2px; }
.status .ramp { margin-right: 3px; }
.status .hump { margin-left: 2px; }
.status .hump span { left: 4px; }
.hbar { flex: 1; display: flex; background: #434343; }
.hbar button { width: 12px; justify-content: center; background: #565656; }
.hbar button svg { width: 9px; height: 9px; }
.hbar b { width: 12px; background: #4a4a4a; }
.hbar .track i { width: 424px; height: 10px; margin: 1px 0 0 305px; }
.bottom { display: flex; gap: 6px; height: 41px; flex: none; padding: 4px 0 4px 5px; }
.bottom button { width: 38px; justify-content: center; background: var(--panel); }
.bottom button svg { width: 18px; height: 18px; }
.stack { display: flex; flex-direction: column; justify-content: space-between; width: 12px; color: #7c7c7c; }

.materials { align-items: center; gap: 6px; border-left: 1px solid #2e2e2e; padding-left: 1px; border-right: 1px solid #2e2e2e; }
.materials .dockhead { align-self: stretch; margin-bottom: -4px; padding: 0 1px 0 3px; }
.materials button { width: 33px; height: 30px; justify-content: center; background: var(--panel); outline: 1px solid #303030; }
.materials svg:not(.s10) { width: 19px; height: 19px; }

.right { padding-right: 1px; }
.right .dockhead { padding: 0 2px 0 3px; gap: 15px; }
.tab.on.nav { width: auto; padding: 0 4px 0 6px; gap: 5px; }
.right .tab.nav { min-width: 72px; }
.right .tab svg { margin-top: 2px; }
.right .tab.on svg { width: 16px; height: 16px; margin: 0; }
.navigator { height: 243px; flex: none; display: flex; flex-direction: column; }
.preview { flex: 1; padding: 22px 1px 0; background: linear-gradient(#8e2026, #8e2026) 0 166px / 100% 1px no-repeat var(--dark); }
.preview div { height: 132px; background: #fefefe; }
.navctl { height: 44px; margin-bottom: 5px; padding: 3px 0 1px 5px; background: var(--panel); }
.navctl > div { display: flex; align-items: center; height: 20px; }
.navctl .gauge { width: 82px; }
.navctl .gauge input::-webkit-slider-thumb { height: 19px; }
.navctl output { width: 48px; padding-right: 0; text-align: right; margin-right: 1px; }
.navctl button { width: 20px; justify-content: center; }
.navctl button svg { width: 16px; height: 16px; }
.navctl hr { width: 1px; height: 16px; margin: 0 2px; }
.layerprop { height: 243px; flex: none; display: flex; flex-direction: column; background: var(--list); border-bottom: 5px solid var(--bg); }
.lcolor { display: flex; align-items: center; height: 26px; padding: 0 17px; }
.lcolor span { flex: 1; }
.well { width: 106px; height: 19px; margin-right: 4px; background: #fff; border: 3px solid #484848; outline: 1px solid #1e1e1e; border-radius: 2px; }
.layerpanel { flex: 1; display: flex; flex-direction: column; background: var(--list); }
.tabs.flat { height: 14px; background: var(--bg); }
.flat .tab.lay { height: 18px; gap: 6px; padding: 0 4px 0 6px; width: 55px; }
.flat .tab.lay svg, .flat .tab.txt svg { width: 15px; height: 15px; }
.flat .tab.txt { width: 63px; gap: 6px; font: 11px/14px var(--body); }
.flat .tab.txt:last-child { width: 84px; }
.flat .tab.txt svg { margin-top: 1px; }
.lctl { background: var(--panel); padding: 5px 0 0 1px; height: 73px; }
.lctl svg { width: 16px; height: 16px; }
.lctl .s10 { width: 10px; height: 10px; }
.lctl > div { display: flex; align-items: center; }
.box { height: 20px; border: 1px solid #777; background: #626262; justify-content: center; gap: 4px; }
.r1 { height: 20px; }
.r1 .box { width: 39px; gap: 6px; }
.r1 .box svg:first-child { width: 18px; height: 18px; }
.blend { width: 75px; height: 20px; justify-content: flex-end; background: #515151; }
meter { appearance: none; width: 75px; height: 10px; margin-left: 9px; border: 1px solid #747474; background: none; }
meter::-webkit-meter-bar { background: none; border: 0; }
.r2 { height: 22px; padding-left: 26px; gap: 4px; }
.r2 .box { width: 36px; }
.r2 .box + .box { margin-left: -3px; }
.r2 .box i { width: 14px; height: 14px; background: #fff; }
.r3 { height: 24px; padding-left: 1px; gap: 4px; }
.r3 .first { margin-right: 57px; }
.layer { display: flex; height: 33px; margin-right: 13px; border-bottom: 1px solid #262626; }
.layer > button { width: 19px; justify-content: center; border-right: 1px solid #2a2a2a; }
.layer > button svg { width: 16px; height: 16px; }
.entry { flex: 1; display: flex; align-items: center; background: #5f677f; padding-left: 4px; color: var(--ink); }
.thumb { width: 40px; height: 32px; }
.s12 { width: 12px; height: 10px; }
.rc { width: 16px; height: 16px; margin: 0 8px 0 4px; }
.entry span { color: #dde; margin-top: 14px; }
```
